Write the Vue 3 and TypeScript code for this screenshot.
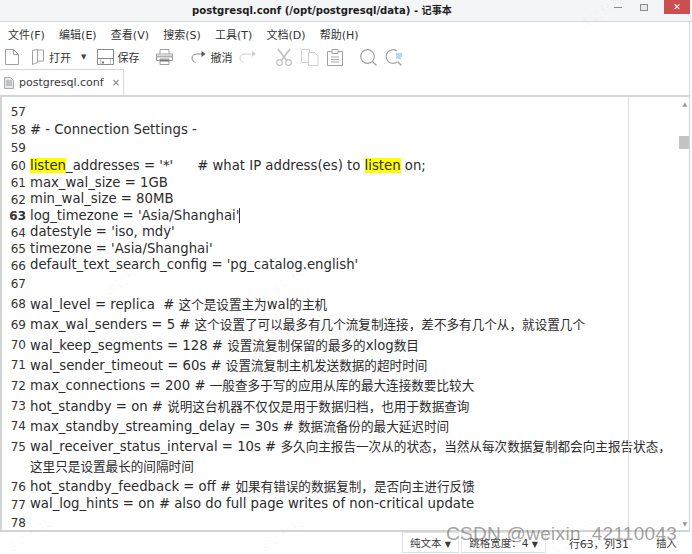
<script setup lang="ts">
interface Row { n?: number; h: number; html?: boolean; text?: string; cur?: boolean }
const rows: Row[] = [
  { n: 57, h: 18 },
  { n: 58, h: 18, text: '# - Connection Settings -' },
  { n: 59, h: 18 },
  { n: 60, h: 18, html: true },
  { n: 61, h: 16.5, text: 'max_wal_size = 1GB' },
  { n: 62, h: 16.5, text: 'min_wal_size = 80MB' },
  { n: 63, h: 16.5, text: "log_timezone = 'Asia/Shanghai'", cur: true },
  { n: 64, h: 16.5, text: "datestyle = 'iso, mdy'" },
  { n: 65, h: 16.5, text: "timezone = 'Asia/Shanghai'" },
  { n: 66, h: 16.5, text: "default_text_search_config = 'pg_catalog.english'" },
  { n: 67, h: 20 },
  { n: 68, h: 20.5, text: 'wal_level = replica  # 这个是设置主为wal的主机' },
  { n: 69, h: 20.5, text: 'max_wal_senders = 5 # 这个设置了可以最多有几个流复制连接，差不多有几个从，就设置几个' },
  { n: 70, h: 20.3, text: 'wal_keep_segments = 128 # 设置流复制保留的最多的xlog数目' },
  { n: 71, h: 20.3, text: 'wal_sender_timeout = 60s # 设置流复制主机发送数据的超时时间' },
  { n: 72, h: 20.3, text: 'max_connections = 200 # 一般查多于写的应用从库的最大连接数要比较大' },
  { n: 73, h: 20.3, text: 'hot_standby = on # 说明这台机器不仅仅是用于数据归档，也用于数据查询' },
  { n: 74, h: 20.3, text: 'max_standby_streaming_delay = 30s # 数据流备份的最大延迟时间' },
  { n: 75, h: 20.3, text: 'wal_receiver_status_interval = 10s # 多久向主报告一次从的状态，当然从每次数据复制都会向主报告状态，' },
  { h: 20.3, text: '这里只是设置最长的间隔时间' },
  { n: 76, h: 19, text: 'hot_standby_feedback = off # 如果有错误的数据复制，是否向主进行反馈' },
  { n: 77, h: 17, text: 'wal_log_hints = on # also do full page writes of non-critical update' },
  { n: 78, h: 19 },
]
const menus = ['文件(F)', '编辑(E)', '查看(V)', '搜索(S)', '工具(T)', '文档(D)', '帮助(H)']
const split = (s: string) => s.match(/[\u3000-\u9fff\uff00-\uffef]+|[^\u3000-\u9fff\uff00-\uffef]+/g) ?? []
const isCjk = (s: string) => /[\u3000-\u9fff\uff00-\uffef]/.test(s)
const stamps = [
  { left: '575px', top: '2px' },
  { left: '2px', top: '525px' },
  { left: '255px', top: '525px' },
  { left: '545px', top: '530px' },
  { left: '265px', top: '268px' },
  { left: '100px', top: '268px' },
]
</script>

<template>
  <div class="win">
    <header class="title">
      <span class="title-text">postgresql.conf (/opt/postgresql/data) - 记事本</span>
      <div class="controls">
        <span class="min"></span>
        <span class="max"></span>
        <span class="close">✕</span>
      </div>
    </header>
    <nav class="menu">
      <span v-for="m in menus" :key="m">{{ m }}</span>
    </nav>
    <div class="toolbar">
      <svg class="ic" width="14" height="16" viewBox="0 0 14 16"><path d="M.5 .5h8l5 5v10h-13z M8.500 .5v5h5" fill="#fff" stroke="#a0a0a0"/></svg>
      <svg class="ic open" width="12" height="16" viewBox="0 0 12 16"><path d="M.5 1.500l5 -1v13l-5 2z M5.500 1h6v11h-6" fill="#fff" stroke="#a0a0a0"/></svg>
      <span class="tb-label open-l">打开</span>
      <span class="arrow">▼</span>
      <svg class="ic save" width="17" height="16" viewBox="0 0 17 16"><path d="M.5 .5h16v15h-16z" fill="#fff" stroke="#8a8a8a"/><path d="M.5 9.500h16" stroke="#8a8a8a"/><path d="M3.500 10v5.500 M13.500 10v5.500" stroke="#c8c8c8"/><rect x="5" y="12.500" width="2" height="2" fill="#777"/></svg>
      <span class="tb-label">保存</span>
      <svg class="ic print" width="17" height="16" viewBox="0 0 17 16"><path d="M4 5v-4.500h9v4.500 M.5 5h16v6.500h-16z M4 10h9v5.500h-9z" fill="#fff" stroke="#a0a0a0"/><path d="M1 7.500h15" stroke="#b0b0b0" stroke-width="2"/><path d="M4 11.500h9" stroke="#777" stroke-width="2"/></svg>
      <svg class="ic undo" width="15" height="12" viewBox="0 0 15 12"><path d="M12 3h-6c-3 0-5 1.500-5 4s2 4 3.500 4.500" fill="none" stroke="#8a8a8a"/><path d="M10.500 0l4 3-4 3z" fill="#555"/></svg>
      <span class="tb-label undo-l">撤消</span>
      <svg class="ic redo" width="18" height="12" viewBox="0 0 18 12"><path d="M14 3h-8c-3 0-5 1.500-5 4s2 4 3.500 4.500" fill="none" stroke="#d0d0d0"/><path d="M13 0l4 3-4 3z" fill="#d0d0d0"/></svg>
      <svg class="ic cut" width="18" height="18" viewBox="0 0 18 18"><path d="M3 1l9 12 M15 1l-9 12" stroke="#c2c2c2" stroke-width="1.600" fill="none"/><circle cx="4.500" cy="14.500" r="2.800" fill="none" stroke="#c2c2c2" stroke-width="1.200"/><circle cx="13.500" cy="14.500" r="2.800" fill="none" stroke="#c2c2c2" stroke-width="1.200"/></svg>
      <svg class="ic copy" width="18" height="17" viewBox="0 0 18 17"><path d="M.5 .5h8v13h-8z" fill="#fff" stroke="#d0d0d0"/><path d="M7.500 3.500h6l3.500 3.500v9.500h-9.500z" fill="#fff" stroke="#d0d0d0"/></svg>
      <svg class="ic paste" width="16" height="17" viewBox="0 0 16 17"><path d="M.5 2.500h15v14h-15z" fill="#fff" stroke="#a0a0a0"/><path d="M5 .5h6v4h-6z" fill="#fff" stroke="#a0a0a0"/><path d="M4 8h8 M4 10.500h8 M4 13h8" stroke="#aaa"/></svg>
      <svg class="ic find" width="17" height="17" viewBox="0 0 17 17"><circle cx="7.500" cy="7.500" r="6.800" fill="none" stroke="#a0a0a0" stroke-width="1.200"/><path d="M12.500 12.500l4 4" stroke="#a0a0a0" stroke-width="1.200"/></svg>
      <svg class="ic replace" width="18" height="17" viewBox="0 0 18 17"><path d="M12 2a6.800 6.800 0 1 0 0 11" fill="none" stroke="#a0a0a0" stroke-width="1.200"/><path d="M12.500 12.500l4 4" stroke="#a0a0a0" stroke-width="1.200"/><path d="M11 5h6 M11 7h6 M11 9h5" stroke="#6cb2ea"/></svg>
    </div>
    <div class="tabs">
      <div class="tab">
        <svg width="10" height="12" viewBox="0 0 10 12"><path d="M.5 .5h6l3 3v8h-9z" fill="#e6e8ea" stroke="#a8abae"/><path d="M2 4h6 M2 6h6 M2 8h6" stroke="#9a9ea2"/></svg>
        <span class="tab-name">postgresql.conf</span>
        <span class="tab-x">×</span>
      </div>
    </div>
    <main class="editor">
      <div class="lines">
        <div v-for="(r, i) in rows" :key="i" class="row" :style="{ height: r.h + 'px' }">
          <span class="num" :class="{ bold: r.cur }">{{ r.n }}</span>
          <span v-if="r.html" class="code"><mark>listen</mark>_addresses = '*'<span class="gap"></span># what IP address(es) to <mark>listen</mark> on;</span>
          <span v-else class="code" :class="{ caret: r.cur }"><template v-for="(s, k) in split(r.text ?? '')" :key="k"><span :class="{ cjk: isCjk(s) }">{{ s }}</span></template></span>
        </div>
      </div>
      <div class="margin"></div>
      <aside class="scroll">
        <span class="up">▲</span>
        <span class="thumb"></span>
        <span class="down">▼</span>
      </aside>
    </main>
    <footer class="status">
      <span class="cell plain">纯文本 <i>▼</i></span>
      <span class="cell tabw">跳格宽度：4 <i>▼</i></span>
      <span class="pos">行63，列31</span>
      <span class="ins">插入</span>
    </footer>
    <span v-for="(st, i) in stamps" :key="i" class="stamp" :style="st">迪迈科技</span>
    <span class="wm">CSDN @weixin_42110043</span>
  </div>
</template>

<style scoped>
.win {
  position: relative;
  width: 692px;
  height: 554px;
  overflow: hidden;
  display: flex;
  flex-direction: column;
  background: #fff;
  font-family: "DejaVu Sans", "Noto Sans CJK SC", sans-serif;
  color: #2c2c2c;
}
.title {
  position: relative;
  height: 21px;
  flex: none;
  background: #f3f5f7;
  border-bottom: 1px solid #d4d6d8;
  padding-right: 48px;
  text-align: center;
  font-size: 10.100px;
  font-weight: 700;
  line-height: 21px;
  color: #1e1e1e;
}
.controls {
  position: absolute;
  top: 0;
  right: 2px;
  display: flex;
  align-items: flex-start;
}
.min { width: 8px; height: 1px; background: #8d8d8d; margin: 7px 18px 0 0; }
.max { width: 6px; height: 5px; border: 1px solid #8d8d8d; background: #e8e8e8; margin: 4px 16px 0 0; }
.close {
  width: 26px;
  height: 14px;
  background: #c9504f;
  color: #fff;
  font-size: 9px;
  line-height: 14px;
  font-weight: 700;
  text-align: center;
}
.menu {
  height: 23px;
  flex: none;
  display: flex;
  gap: 14.200px;
  padding: 0 0 0 8px;
  align-items: center;
  font-size: 11px;
  color: #333;
  box-sizing: border-box;
  border-right: 1px solid #d8d8d8;
  width: 690px;
}
.toolbar {
  height: 24px;
  flex: none;
  display: flex;
  align-items: center;
  padding-left: 5px;
  font-size: 11px;
  color: #333;
  box-sizing: border-box;
  border-right: 1px solid #d8d8d8;
  width: 690px;
}
.ic { flex: none; }
.open { margin-left: 13px; }
.tb-label { margin-left: 3px; }
.open-l { margin-left: 5px; }
.undo-l { margin-left: 4px; }
.arrow { font-size: 7px; margin: 0 0 0 10px; color: #444; }
.save { margin-left: 11px; }
.print { margin-left: 17px; }
.undo { margin-left: 18px; }
.redo { margin-left: 7px; }
.cut { margin-left: 18px; }
.copy { margin-left: 8px; }
.paste { margin-left: 8px; }
.find { margin-left: 17px; }
.replace { margin-left: 8px; }
.tabs {
  height: 26px;
  flex: none;
  display: flex;
  align-items: flex-end;
  box-sizing: border-box;
  border-right: 1px solid #d8d8d8;
  width: 690px;
}
.tab {
  width: 124px;
  height: 26px;
  box-sizing: border-box;
  background: #fff;
  border: 1px solid #d8d8d8;
  border-left: 0;
  border-bottom: 0;
  display: flex;
  align-items: center;
  padding-left: 4px;
  font-size: 11px;
  color: #3a3a3a;
}
.tab-name { margin-left: 5px; }
.tab-x { margin-left: 8px; font-size: 10px; color: #777; }
.editor {
  flex: none;
  width: 690px;
  box-sizing: border-box;
  height: 437px;
  border: 2px solid #d4d4d4;
  border-right-width: 1px;
  display: flex;
  background: #fff;
}
.lines { flex: none; width: 626px; padding-top: 5px; box-sizing: border-box; }
.row { display: flex; align-items: center; white-space: pre; font-size: 13.260px; }
.num { width: 24px; flex: none; text-align: right; padding-top: 2px; font-size: 12px; color: #333; }
.bold { font-weight: 700; }
.code { margin-left: 4px; color: #2c2c2c; }
.gap { display: inline-block; width: 24px; }
.cjk { font-size: 12.600px; }
.code mark { background: #ffff00; color: #2c2c2c; }
.caret { border-right: 1px solid #333; line-height: 15px; }
.margin { width: 1px; background: #dedede; flex: none; }
.scroll { flex: 1; position: relative; }
.up, .down { position: absolute; right: 2px; font-size: 6px; color: #999; }
.up { top: 3px; }
.down { bottom: 3px; }
.thumb { position: absolute; right: 0; top: 39px; width: 10px; height: 13px; background: #c4c4c4; }
.status {
  flex: 1;
  display: flex;
  align-items: center;
  padding: 0 0 2px 402px;
  font-size: 10.500px;
  color: #3a3a3a;
  white-space: nowrap;
}
.cell { height: 21px; box-sizing: border-box; border: 1px solid #e2e2e2; line-height: 20px; text-align: center; }
.cell i { font-style: normal; font-size: 8px; }
.plain { width: 57px; }
.tabw { width: 85px; margin-left: 2px; }
.pos { margin-left: 23px; font-size: 10.800px; }
.ins { margin-left: 27px; }
.stamp {
  position: absolute;
  transform: rotate(-32deg);
  font-size: 13px;
  color: rgba(0, 0, 0, .035);
  white-space: nowrap;
}
.wm {
  position: absolute;
  left: 446px;
  top: 523px;
  font-family: "Liberation Sans", sans-serif;
  font-size: 19px;
  letter-spacing: .3px;
  color: rgba(110, 110, 110, .65);
  white-space: nowrap;
}
</style>
